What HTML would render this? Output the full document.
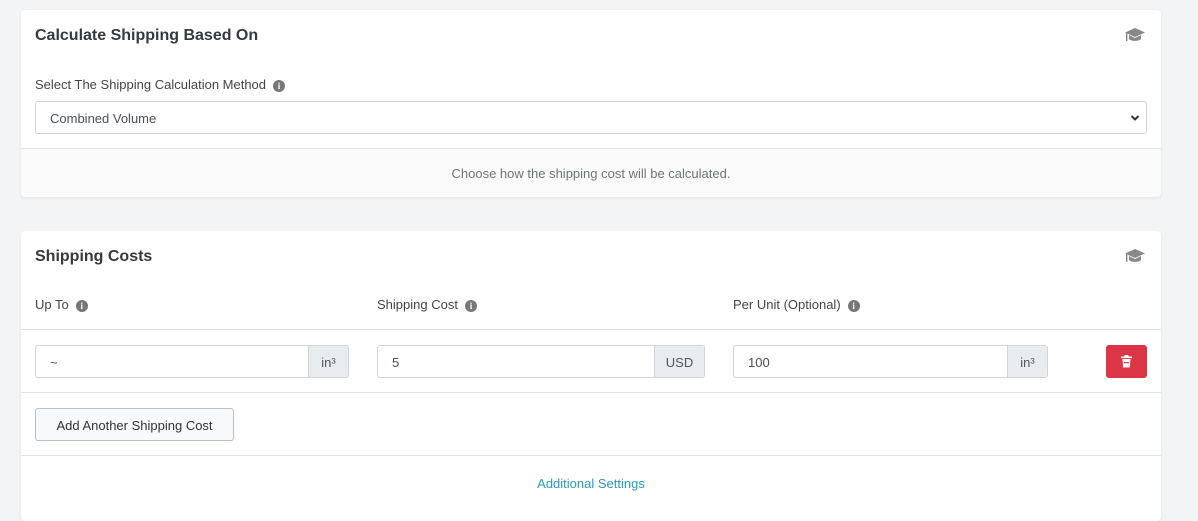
<!DOCTYPE html><html><head><style>
*{box-sizing:border-box;margin:0;padding:0}
body{width:1198px;height:507px;background:#f3f4f6;font-family:"Liberation Sans",sans-serif;color:#212529;position:relative;overflow:hidden;font-size:13px}
.card{position:absolute;left:21px;width:1140px;background:#fff;border-radius:4px;box-shadow:0 1px 3px rgba(0,0,0,.08)}
.abs{position:absolute}
.t{font-size:16px;font-weight:bold;color:#343a40}
.lbl{color:#444;font-size:13px}
.info{display:inline-block;width:12px;height:12px;border-radius:50%;background:#777;color:#fff;font-size:9px;font-weight:bold;text-align:center;line-height:12px;margin-left:7px;vertical-align:0px;font-family:"Liberation Serif",serif}
.hr{position:absolute;left:0;right:0;height:1px;background:#e3e3e3}
.inp{position:absolute;height:33px;border:1px solid #ced4da;border-radius:3px;background:#fff;padding-left:14px;line-height:33px;color:#495057;overflow:hidden}
.add{position:absolute;right:0;top:0;bottom:0;background:#e9ecef;border-left:1px solid #ced4da;color:#555;text-align:center}
</style></head><body>
<div class="card" style="top:10px;height:187px">
 <div class="abs t" style="left:14px;top:17px">Calculate Shipping Based On</div>
 <svg class="abs" style="left:1103px;top:17px" width="22" height="16" viewBox="0 0 22 16"><path d="M11 1L1 5.5 11 10 21 5.5Z" fill="#888"/><path d="M5 8v4c2 2.5 10 2.5 12 0V8l-6 3z" fill="#888"/><rect x="2" y="6" width="1.4" height="8" fill="#888"/></svg>
 <div class="abs lbl" style="left:14px;top:67px">Select The Shipping Calculation Method<span class="info">i</span></div>
 <div class="inp" style="left:14px;top:91px;width:1112px">Combined Volume
  <svg class="abs" style="right:6px;top:12px" width="10" height="8" viewBox="0 0 10 8"><path d="M1.5 2l3.5 3.5L8.5 2" stroke="#333" stroke-width="2" fill="none"/></svg></div>
 <div class="hr" style="top:138px"></div>
 <div class="abs" style="left:0;right:0;top:139px;bottom:0;background:#fafafa;border-radius:0 0 4px 4px;text-align:center;line-height:50px;color:#6c757d">Choose how the shipping cost will be calculated.</div>
</div>
<div class="card" style="top:231px;height:290px">
 <div class="abs t" style="left:14px;top:17px">Shipping Costs</div>
 <svg class="abs" style="left:1103px;top:17px" width="22" height="16" viewBox="0 0 22 16"><path d="M11 1L1 5.5 11 10 21 5.5Z" fill="#888"/><path d="M5 8v4c2 2.5 10 2.5 12 0V8l-6 3z" fill="#888"/><rect x="2" y="6" width="1.4" height="8" fill="#888"/></svg>
 <div class="abs lbl" style="left:14px;top:66px">Up To<span class="info">i</span></div>
 <div class="abs lbl" style="left:356px;top:66px">Shipping Cost<span class="info">i</span></div>
 <div class="abs lbl" style="left:712px;top:66px">Per Unit (Optional)<span class="info">i</span></div>
 <div class="hr" style="top:98px"></div>
 <div class="inp" style="left:14px;top:114px;width:314px">~<div class="add" style="width:40px">in³</div></div>
 <div class="inp" style="left:356px;top:114px;width:328px">5<div class="add" style="width:50px">USD</div></div>
 <div class="inp" style="left:712px;top:114px;width:315px">100<div class="add" style="width:40px">in³</div></div>
 <div class="abs" style="left:1085px;top:114px;width:41px;height:33px;background:#dc3545;border-radius:3px">
  <svg class="abs" style="left:14px;top:10px" width="13" height="13" viewBox="0 0 13 13"><rect x="1" y="1.5" width="11" height="1.6" fill="#fff"/><rect x="4.5" y="0" width="4" height="2" fill="#fff"/><path d="M2.5 4h8l-.6 8.5H3.1z" fill="#fff"/><rect x="4" y="7" width="5" height="1.2" fill="#dc3545"/></svg></div>
 <div class="hr" style="top:161px"></div>
 <div class="abs" style="left:14px;top:177px;width:199px;height:33px;border:1px solid #b8c0c8;border-radius:3px;background:#f8f9fa;text-align:center;line-height:33px;color:#333">Add Another Shipping Cost</div>
 <div class="hr" style="top:224px"></div>
 <div class="abs" style="left:0;right:0;top:245px;text-align:center;color:#2a9ac0">Additional Settings</div>
</div>
</body></html>
